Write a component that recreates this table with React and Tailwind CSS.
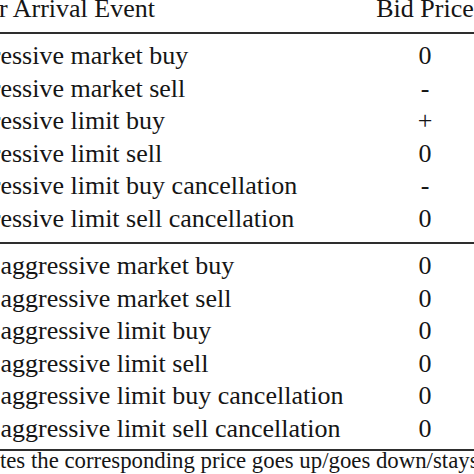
import React from 'react';

const aggressive = [
  { event: 'Aggressive market buy', bid: '0' },
  { event: 'Aggressive market sell', bid: '-' },
  { event: 'Aggressive limit buy', bid: '+' },
  { event: 'Aggressive limit sell', bid: '0' },
  { event: 'Aggressive limit buy cancellation', bid: '-' },
  { event: 'Aggressive limit sell cancellation', bid: '0' },
];

const passive = [
  { event: 'Non-aggressive market buy', bid: '0' },
  { event: 'Non-aggressive market sell', bid: '0' },
  { event: 'Non-aggressive limit buy', bid: '0' },
  { event: 'Non-aggressive limit sell', bid: '0' },
  { event: 'Non-aggressive limit buy cancellation', bid: '0' },
  { event: 'Non-aggressive limit sell cancellation', bid: '0' },
];

function Row({ event, bid }) {
  return (
    <div className="flex leading-[32.6px] whitespace-nowrap">
      <div className="w-[423px]">{event}</div>
      <div className="w-[110px] text-center">{bid}</div>
      <div className="w-[110px] text-center">0</div>
    </div>
  );
}

function Rule({ className }) {
  return <div className={`h-[2px] w-full bg-[#2e2e2e] ${className}`} />;
}

export default function App() {
  return (
    <div
      className="w-[474px] h-[474px] overflow-hidden bg-white text-[#151515] text-[26px]"
      style={{ fontFamily: '"Liberation Serif", "Times New Roman", serif' }}
    >
      <div className="mt-[-7px] ml-[-53px] w-[700px]">
        <div className="flex leading-[32.6px] whitespace-nowrap">
          <div className="w-[423px]">Order Arrival Event</div>
          <div className="w-[110px] text-center">Bid Price</div>
          <div className="w-[110px] text-center">Ask Price</div>
        </div>
      </div>
      <Rule className="mt-[6.4px]" />
      <div className="mt-[6px] ml-[-53px] w-[700px]">
        {aggressive.map((r) => (
          <Row key={r.event} {...r} />
        ))}
      </div>
      <Rule className="mt-[6.4px]" />
      <div className="mt-[6px] ml-[-53px] w-[700px]">
        {passive.map((r) => (
          <Row key={r.event} {...r} />
        ))}
      </div>
      <Rule className="mt-[3.5px]" />
      <div className="ml-[-106px] w-[900px] text-[22.8px] leading-[19px] whitespace-nowrap">
        +/-/0 indicates the corresponding price goes up/goes down/stays the same.
      </div>
    </div>
  );
}
